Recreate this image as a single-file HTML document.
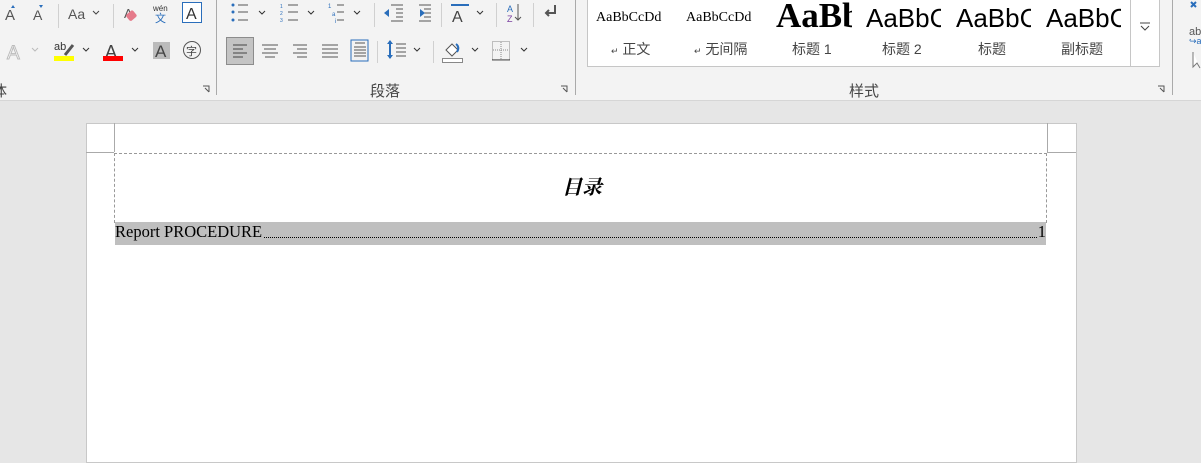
<!DOCTYPE html>
<html><head><meta charset="utf-8"><style>
*{margin:0;padding:0;box-sizing:border-box}
body{width:1201px;height:452px;overflow:hidden;background:#e6e6e6;position:relative;font-family:"Liberation Sans","Noto Sans CJK SC",sans-serif}
.rib{position:absolute;left:0;top:0;width:1201px;height:101px;background:#f3f3f3;border-bottom:1px solid #d6d6d6}
.a{position:absolute;white-space:nowrap}
.lbl{font-size:14px;color:#444}
.gal{position:absolute;left:587px;top:-1px;width:573px;height:68px;background:#fff;border:1px solid #c6c6c6}
.sep{position:absolute;width:1px;background:#c8c8c8}
.page{position:absolute;left:86px;top:123px;width:991px;height:340px;background:#fff;border:1px solid #c8c8c8}
</style></head><body>
<div class="rib">
<svg class="a" style="left:0;top:0" width="1201" height="101">
 <g fill="#555" font-family="Liberation Sans" >
  <text x="5" y="20" font-size="15">A</text><path d="M13 5l-2 3h4z" fill="#2a6ebb"/>
  <text x="33" y="20" font-size="14">A</text><path d="M41 8l-2-3h4z" fill="#2a6ebb"/>
  <text x="68" y="19" font-size="14">Aa</text>
 </g>
 <path d="M93 11l3 3 3-3" stroke="#444" fill="none"/>
 <rect x="58" y="4" width="1" height="24" fill="#d0d0d0"/>
 <rect x="113" y="4" width="1" height="24" fill="#d0d0d0"/>
 <text x="124" y="18" font-size="13" fill="#555">A</text><rect x="127" y="12" width="9" height="8" rx="2" fill="#e57a8a" transform="rotate(-40 131 16)"/>
 <text x="153" y="11" font-size="8" fill="#333">wén</text><text x="155" y="22" font-size="11" fill="#2a6ebb">文</text>
 <rect x="182.5" y="2.5" width="19" height="20" fill="#fff" stroke="#2a6ebb"/><text x="186" y="19" font-size="16" fill="#333">A</text>
 <text x="7" y="59" font-size="19" fill="#fff" stroke="#bbb">A</text><path d="M32 48l3 3 3-3" stroke="#bbb" fill="none"/>
 <text x="54" y="50" font-size="11" fill="#333">ab</text><path d="M65 55l8-10" stroke="#555" stroke-width="3"/><rect x="54" y="56" width="20" height="5" fill="#ffff00"/>
 <path d="M83 48l3 3 3-3" stroke="#333" fill="none"/>
 <text x="105" y="58" font-size="18" fill="#444">A</text><rect x="103" y="56" width="20" height="5" fill="#f00"/>
 <path d="M132 48l3 3 3-3" stroke="#333" fill="none"/>
 <rect x="153" y="42" width="17" height="17" fill="#bbb"/><text x="155" y="57" font-size="17" fill="#444">A</text>
 <circle cx="192" cy="50" r="8.5" fill="none" stroke="#555"/><text x="186" y="55" font-size="11" fill="#444">字</text>
 <rect x="216" y="0" width="1" height="95" fill="#aaa"/>
 <path d="M203 86h6v6M205 88l4 4" stroke="#555" fill="none"/>
 <g fill="#2a6ebb"><circle cx="233" cy="5" r="1.5"/><circle cx="233" cy="12" r="1.5"/><circle cx="233" cy="20" r="1.5"/></g>
 <path d="M238 5h10M238 12h10M238 20h10M288 5h10M288 12h10M288 20h10M337 5h7M337 12h7M337 20h7" stroke="#555"/>
 <path d="M259 11l3 3 3-3M308 11l3 3 3-3M354 11l3 3 3-3" stroke="#333" fill="none"/>
 <text x="280" y="8" font-size="5" fill="#2a6ebb">1</text><text x="280" y="15" font-size="5" fill="#2a6ebb">2</text><text x="280" y="22" font-size="5" fill="#2a6ebb">3</text>
 <text x="328" y="8" font-size="6" fill="#2a6ebb">1</text><text x="332" y="16" font-size="6" fill="#2a6ebb">a</text><text x="335" y="23" font-size="6" fill="#2a6ebb">i</text>
 <rect x="374" y="3" width="1" height="24" fill="#d0d0d0"/>
 <path d="M391 5h12M396 9h7M396 13h7M396 17h7M391 21h12M419 5h12M424 9h7M424 13h7M424 17h7M419 21h12" stroke="#555"/>
 <path d="M384 13l5-4v8zM420 9l5 4-5 4z" fill="#2a6ebb"/>
 <rect x="441" y="3" width="1" height="24" fill="#d0d0d0"/>
 <text x="452" y="22" font-size="16" fill="#444">A</text><path d="M451 5h18" stroke="#2a6ebb" stroke-width="2"/>
 <path d="M477 11l3 3 3-3" stroke="#333" fill="none"/>
 <rect x="496" y="3" width="1" height="24" fill="#d0d0d0"/>
 <text x="507" y="12" font-size="9" fill="#2a6ebb">A</text><text x="507" y="22" font-size="9" fill="#7a3fa0">Z</text><path d="M518 4v16M515 17l3 3 3-3" stroke="#555" fill="none"/>
 <rect x="533" y="3" width="1" height="24" fill="#d0d0d0"/>
 <path d="M555 5v8h-9M549 10l-3 3 3 3" stroke="#555" stroke-width="2" fill="none"/>
 <rect x="226.5" y="37.5" width="27" height="27" fill="#c4c4c4" stroke="#8c8c8c"/>
 <path d="M233 45h14M233 49h10M233 53h14M233 57h10" stroke="#444"/>
 <path d="M262 45h16M264 49h12M262 53h16M265 57h10" stroke="#555"/>
 <path d="M293 45h14M297 49h10M293 53h14M297 57h10" stroke="#555"/>
 <path d="M322 45h16M322 49h16M322 53h16M322 57h16" stroke="#555"/>
 <rect x="351" y="40" width="17" height="21" fill="none" stroke="#2a6ebb"/><path d="M354 47h12M354 50h12M354 53h12M354 56h12M355 43h10" stroke="#555"/>
 <rect x="377" y="41" width="1" height="22" fill="#d0d0d0"/>
 <path d="M390 41v17" stroke="#2a6ebb" stroke-width="2"/><path d="M387 44l3-4 3 4zM387 55l3 4 3-4z" fill="#2a6ebb"/>
 <path d="M396 44h10M396 48h10M396 52h10M396 56h10" stroke="#555"/>
 <path d="M414 48l3 3 3-3" stroke="#333" fill="none"/>
 <rect x="433" y="41" width="1" height="22" fill="#d0d0d0"/>
 <path d="M446 50l6-6 6 6-6 6z" fill="#fff" stroke="#555"/><path d="M456 44q4 3 1 8" stroke="#2a6ebb" stroke-width="2" fill="none"/>
 <rect x="442.5" y="58.5" width="20" height="4" fill="#fff" stroke="#888"/>
 <path d="M472 48l3 3 3-3" stroke="#333" fill="none"/>
 <rect x="492.5" y="41.5" width="17" height="18" fill="none" stroke="#888" stroke-dasharray="1 1"/><path d="M501 42v17M493 50h16" stroke="#888" stroke-dasharray="1 1"/><path d="M492 60h18" stroke="#555"/>
 <path d="M521 48l3 3 3-3" stroke="#333" fill="none"/>
 <rect x="575" y="0" width="1" height="95" fill="#aaa"/>
 <path d="M561 86h6v6M563 88l4 4" stroke="#555" fill="none"/>
 <rect x="1172" y="0" width="1" height="95" fill="#aaa"/>
 <path d="M1158 86h6v6M1160 88l4 4" stroke="#555" fill="none"/>
 <path d="M1191 7l5-5M1196 7l-5-5" stroke="#2a6ebb" stroke-width="2"/>
 <text x="1189" y="35" font-size="11" fill="#555">ab</text><text x="1189" y="44" font-size="9" fill="#2a6ebb">↪a</text>
 <path d="M1193 52v15l4-4 3 5" fill="#fff" stroke="#777"/>
</svg>
<div class="gal"></div>
<div class="sep" style="left:1130px;top:0;height:67px;background:#c6c6c6"></div>
<svg class="a" style="left:1138px;top:22px" width="14" height="10"><path d="M2 1h10M3 4l4 4 4-4" stroke="#444" fill="none"/></svg>
<div class="a" style="left:596px;top:10px;font:14px 'Liberation Serif',serif;color:#000">AaBbCcDd</div>
<div class="a" style="left:686px;top:10px;font:14px 'Liberation Serif',serif;color:#000">AaBbCcDd</div>
<div class="a" style="left:776px;top:-4px;width:76px;overflow:hidden;font:bold 35px 'Liberation Serif',serif;color:#000">AaBb</div>
<div class="a" style="left:866px;top:3px;width:75px;overflow:hidden;font:26px 'Liberation Sans',sans-serif;color:#000">AaBbC</div>
<div class="a" style="left:956px;top:3px;width:75px;overflow:hidden;font:26px 'Liberation Sans',sans-serif;color:#000">AaBbC</div>
<div class="a" style="left:1046px;top:3px;width:75px;overflow:hidden;font:26px 'Liberation Sans',sans-serif;color:#000">AaBbC</div>
<div class="a lbl" style="left:611px;top:39px"><span style="font-size:9px">↵</span> 正文</div>
<div class="a lbl" style="left:694px;top:39px"><span style="font-size:9px">↵</span> 无间隔</div>
<div class="a lbl" style="left:792px;top:39px">标题 1</div>
<div class="a lbl" style="left:882px;top:39px">标题 2</div>
<div class="a lbl" style="left:978px;top:39px">标题</div>
<div class="a lbl" style="left:1061px;top:39px">副标题</div>
<div class="a lbl" style="left:370px;top:80px;font-size:15px">段落</div>
<div class="a lbl" style="left:849px;top:80px;font-size:15px">样式</div>
<div class="a lbl" style="left:-8px;top:80px;font-size:15px">体</div>
</div>
<div class="page"></div>
<div class="a" style="left:114px;top:123px;width:1px;height:29px;background:#aaa"></div>
<div class="a" style="left:86px;top:152px;width:28px;height:1px;background:#aaa"></div>
<div class="a" style="left:1047px;top:123px;width:1px;height:29px;background:#aaa"></div>
<div class="a" style="left:1047px;top:152px;width:29px;height:1px;background:#aaa"></div>
<div class="a" style="left:114px;top:153px;width:933px;height:70px;border:1px dashed #999;border-bottom:none"></div>
<div class="a" style="left:562px;top:171px;font:italic bold 20px 'Liberation Serif','Noto Serif CJK SC',serif;color:#000">目录</div>
<div class="a" style="left:115px;top:222px;width:931px;height:23px;background:#bfbfbf;display:flex;align-items:flex-end;font:16.5px 'Liberation Serif',serif;color:#000;padding-bottom:3px">
 <span>Report PROCEDURE</span><span style="flex:1;border-bottom:1px dotted #000;margin:0 1px 4px 2px"></span><span>1</span>
</div>
</body></html>
